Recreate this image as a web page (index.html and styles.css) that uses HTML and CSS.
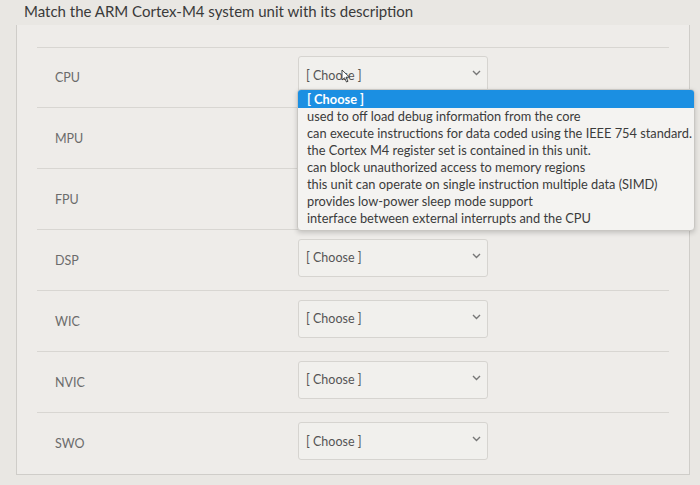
FILE: index.html
```html
<!DOCTYPE html>
<html>
<head>
<meta charset="utf-8">
<link rel="stylesheet" href="styles.css">
</head>
<body>
<h1 class="title">Match the ARM Cortex-M4 system unit with its description</h1>
<div class="card">
  <div class="row">
    <span class="label">CPU</span>
    <div class="select open">
      <span class="value">[ Choose ]</span>
      <svg class="cursor" width="12" height="14" viewBox="0 0 12 14"><path d="M1 1 L1 11 L3.5 8.8 L5.5 13 L7 12.3 L5 8.2 L8.5 8.2 Z" fill="#fff" stroke="#333" stroke-width="0.9"/></svg>
      <svg class="chev" width="9" height="6" viewBox="0 0 9 6"><path d="M1 1 L4.5 4.5 L8 1" fill="none" stroke="#777" stroke-width="1.4"/></svg>
    </div>
    <ul class="menu">
      <li class="active">[ Choose ]</li>
      <li>used to off load debug information from the core</li>
      <li>can execute instructions for data coded using the IEEE 754 standard.</li>
      <li>the Cortex M4 register set is contained in this unit.</li>
      <li>can block unauthorized access to memory regions</li>
      <li>this unit can operate on single instruction multiple data (SIMD)</li>
      <li>provides low-power sleep mode support</li>
      <li>interface between external interrupts and the CPU</li>
    </ul>
  </div>
  <div class="row">
    <span class="label">MPU</span>
  </div>
  <div class="row">
    <span class="label">FPU</span>
  </div>
  <div class="row">
    <span class="label">DSP</span>
    <div class="select"><span class="value">[ Choose ]</span><svg class="chev" width="9" height="6" viewBox="0 0 9 6"><path d="M1 1 L4.5 4.5 L8 1" fill="none" stroke="#777" stroke-width="1.4"/></svg></div>
  </div>
  <div class="row">
    <span class="label">WIC</span>
    <div class="select"><span class="value">[ Choose ]</span><svg class="chev" width="9" height="6" viewBox="0 0 9 6"><path d="M1 1 L4.5 4.5 L8 1" fill="none" stroke="#777" stroke-width="1.4"/></svg></div>
  </div>
  <div class="row">
    <span class="label">NVIC</span>
    <div class="select"><span class="value">[ Choose ]</span><svg class="chev" width="9" height="6" viewBox="0 0 9 6"><path d="M1 1 L4.5 4.5 L8 1" fill="none" stroke="#777" stroke-width="1.4"/></svg></div>
  </div>
  <div class="row last">
    <span class="label">SWO</span>
    <div class="select"><span class="value">[ Choose ]</span><svg class="chev" width="9" height="6" viewBox="0 0 9 6"><path d="M1 1 L4.5 4.5 L8 1" fill="none" stroke="#777" stroke-width="1.4"/></svg></div>
  </div>
</div>
</body>
</html>
```
FILE: styles.css
```css
html, body {
  margin: 0;
  padding: 0;
}
body {
  width: 700px;
  height: 485px;
  overflow: hidden;
  background: #e9e7e3;
  font-family: Lato, "Open Sans", sans-serif;
  color: #444;
}
.title {
  margin: 0;
  padding: 1px 0 0 24px;
  height: 24px;
  font-size: 15px;
  line-height: 20px;
  font-weight: 400;
  color: #3a3a3a;
}
.card {
  margin-left: 16px;
  width: 674px;
  height: 450px;
  border-left: 1px solid #cfcdc9;
  border-right: 1px solid #cfcdc9;
  border-bottom: 1px solid #cfcdc9;
  background: #eeece9;
  padding-top: 22px;
  box-sizing: border-box;
}
.row {
  position: relative;
  display: flex;
  align-items: center;
  height: 61px;
  margin-left: 20px;
  margin-right: 20px;
  border-bottom: 1px solid #d8d6d2;
  box-sizing: border-box;
}
.row:first-child {
  border-top: 1px solid #d8d6d2;
}
.row.last {
  border-bottom: none;
}
.label {
  width: 261px;
  padding-left: 18px;
  font-size: 12.5px;
  color: #6b6b6b;
  box-sizing: border-box;
}
.select {
  position: relative;
  display: flex;
  align-items: center;
  justify-content: space-between;
  width: 190px;
  height: 38px;
  margin-top: -5px;
  padding: 0 6px 0 7px;
  box-sizing: border-box;
  background: #f1f0ed;
  border: 1px solid #d6d4d0;
  border-radius: 3px;
  font-size: 12.5px;
  color: #555;
}
.select .chev {
  margin-top: -4px;
}
.cursor {
  position: absolute;
  left: 42px;
  top: 12px;
}
.menu {
  position: absolute;
  left: 260px;
  top: 41px;
  width: 396px;
  margin: 0;
  padding: 0 0 3px 0;
  list-style: none;
  background: #f4f3f1;
  border: 1px solid #c9c7c3;
  border-radius: 4px;
  box-shadow: 0 2px 5px rgba(0,0,0,0.18);
  z-index: 5;
  overflow: hidden;
  font-size: 12.8px;
  line-height: 17px;
  color: #3b3b3b;
}
.menu li {
  padding-left: 9px;
  white-space: nowrap;
}
.menu li.active {
  background: #1b8fe2;
  color: #fff;
  font-weight: 700;
  padding-top: 1px;
}
```
